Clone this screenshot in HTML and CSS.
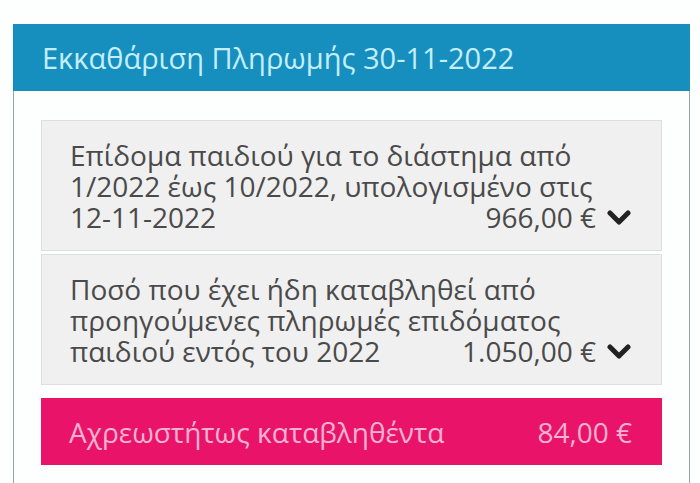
FILE: index.html
```html
<!DOCTYPE html>
<html lang="el">
<head>
<meta charset="utf-8">
<link rel="stylesheet" href="styles.css">
</head>
<body>
<div class="card">
  <div class="card-head">Εκκαθάριση Πληρωμής 30-11-2022</div>
  <div class="card-body">
    <div class="item">
      <div class="line">Επίδομα παιδιού για το διάστημα από</div>
      <div class="line">1/2022 έως 10/2022, υπολογισμένο στις</div>
      <div class="line last"><span>12-11-2022</span><span class="amount">966,00 €<svg class="chev" viewBox="0 0 24 16" width="24" height="16"><polyline points="3,3 12,12 21,3" fill="none" stroke="#222" stroke-width="5" stroke-linecap="round" stroke-linejoin="round"/></svg></span></div>
    </div>
    <div class="item">
      <div class="line">Ποσό που έχει ήδη καταβληθεί από</div>
      <div class="line">προηγούμενες πληρωμές επιδόματος</div>
      <div class="line last"><span>παιδιού εντός του 2022</span><span class="amount">1.050,00 €<svg class="chev" viewBox="0 0 24 16" width="24" height="16"><polyline points="3,3 12,12 21,3" fill="none" stroke="#222" stroke-width="5" stroke-linecap="round" stroke-linejoin="round"/></svg></span></div>
    </div>
    <div class="total">
      <span>Αχρεωστήτως καταβληθέντα</span>
      <span>84,00 €</span>
    </div>
  </div>
</div>
</body>
</html>
```
FILE: styles.css
```css
html, body {
  margin: 0;
  padding: 0;
  background: #fdfefe;
  overflow: hidden;
}
body {
  font-family: "Open Sans", "Noto Sans", sans-serif;
}
.card {
  margin: 24px 0 0 13px;
  width: 677px;
  box-sizing: border-box;
  border: 1px solid #8fa9ab;
  border-top: none;
  height: 480px;
}
.card-head {
  background: #168fbf;
  height: 67px;
  margin: 0 -1px;
  padding-left: 29px;
  display: flex;
  align-items: center;
  color: #c4eefc;
  font-size: 29px;
  font-weight: 400;
}
.card-body {
  padding: 29px 27px 0 27px;
  display: flex;
  flex-direction: column;
}
.item {
  background: #f0f0f0;
  border: 1px solid #dedede;
  height: 131px;
  box-sizing: border-box;
  padding: 19px 30px 0 28px;
  margin-bottom: 3px;
  color: #4a4a4a;
  font-size: 28px;
  line-height: 31px;
}
.line {
  white-space: nowrap;
}
.line.last {
  display: flex;
  justify-content: space-between;
  align-items: center;
}
.amount {
  display: inline-flex;
  align-items: center;
  gap: 11px;
}
.chev {
  display: block;
}
.total {
  margin-top: 10px;
  background: #e9146a;
  height: 67px;
  display: flex;
  align-items: center;
  justify-content: space-between;
  padding: 0 30px 0 28px;
  color: #f6b3d0;
  font-size: 28px;
}
```
